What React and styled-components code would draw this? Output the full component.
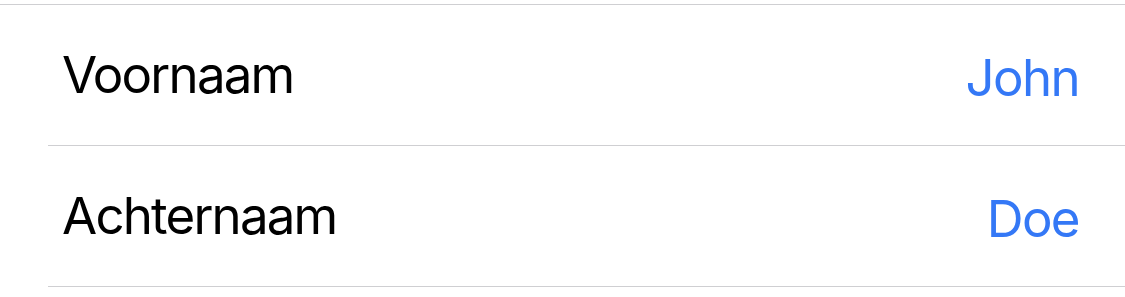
import React from "react";
import styled, { createGlobalStyle } from "styled-components";

const GlobalStyle = createGlobalStyle`
  html, body {
    margin: 0;
    padding: 0;
    background: #ffffff;
  }
  body {
    font-family: Inter, "Noto Sans", "Liberation Sans", sans-serif;
  }
`;

const Page = styled.div`
  padding-top: 4px;
  width: 1125px;
  height: 297px;
  box-sizing: border-box;
`;

const List = styled.div`
  border-top: 1.5px solid #cfcfd2;
`;

const Row = styled.div`
  margin-left: 48px;
  height: 141px;
  display: flex;
  align-items: center;
  justify-content: space-between;
  padding: 0 46px 0 14px;
  border-bottom: 1.5px solid #cfcfd2;
  box-sizing: border-box;
`;

const Label = styled.span`
  font-size: 51px;
  color: #000000;
  letter-spacing: -1.8px;
  margin-top: -2px;
`;

const Value = styled.span`
  font-size: 51px;
  color: #3478f6;
  letter-spacing: -1.6px;
  margin-top: 5px;
`;

const fields = [
  { label: "Voornaam", value: "John" },
  { label: "Achternaam", value: "Doe" },
];

const App = () => {
  return (
    <>
      <GlobalStyle />
      <Page>
        <List>
          {fields.map((f) => (
            <Row key={f.label}>
              <Label>{f.label}</Label>
              <Value>{f.value}</Value>
            </Row>
          ))}
        </List>
      </Page>
    </>
  );
};

export default App;
